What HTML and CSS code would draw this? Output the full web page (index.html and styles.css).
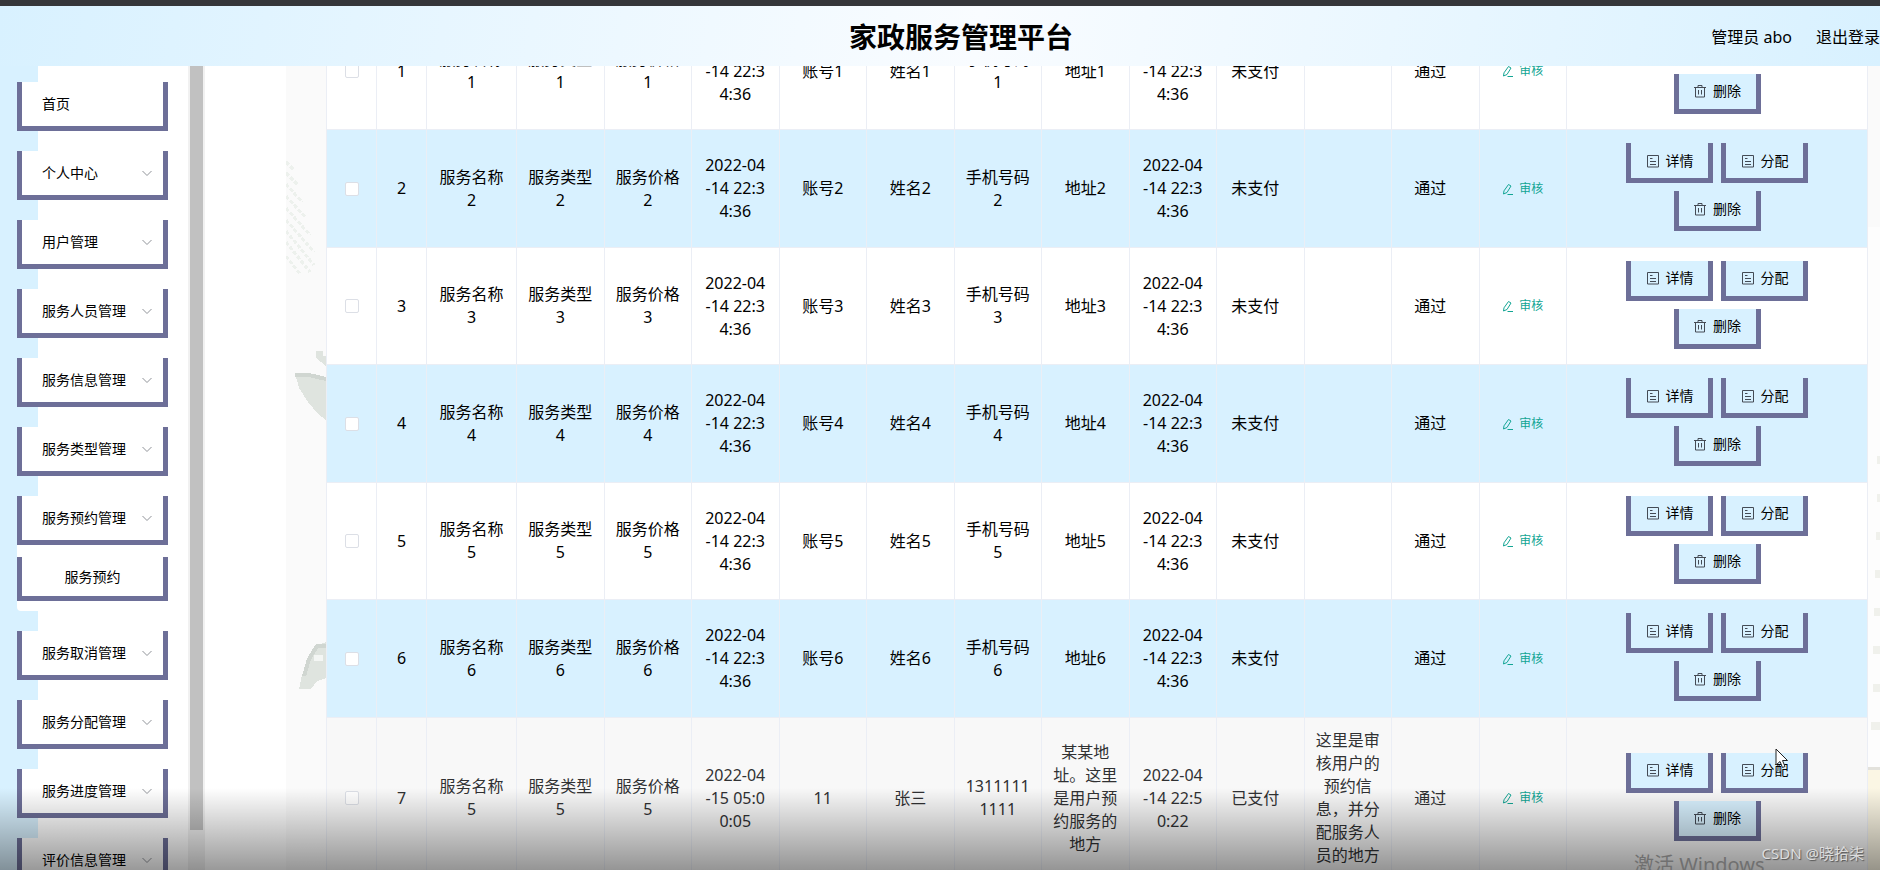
FILE: index.html
```html
<!DOCTYPE html>
<html lang="zh-CN">
<head>
<meta charset="utf-8">
<title>家政服务管理平台</title>
<link rel="stylesheet" href="styles.css">
</head>
<body>
<svg class="sprite" aria-hidden="true">
  <symbol id="i-down" viewBox="0 0 12 12"><path d="M1.500 4l4.500 4.500 4.500-4.500" /></symbol>
  <symbol id="i-doc" viewBox="0 0 14 14"><path d="M1.500 1.500h11v11.500h-11zM4 4.500h2.500M4 7.500h6M4 10.500h6" /></symbol>
  <symbol id="i-trash" viewBox="0 0 14 14"><path d="M1 3.500h12M5 3.500v-2h4v2M2.500 3.500v9.500h9v-9.500M5.500 6v4.500M8.500 6v4.500" /></symbol>
  <symbol id="i-edit" viewBox="0 0 12 12"><path d="M6.500 1.500l2.500 1.500-4 6.500-3.500 1.500 .5-3.200zM5.500 11.500h5.500" /></symbol>
</svg>
<div class="topbar"></div>
<header class="header">
  <h1 class="title">家政服务管理平台</h1>
  <div class="user"><span>管理员 abo</span><a class="logout" href="#">退出登录</a></div>
</header>
<div class="body">
  <nav class="side" id="side"></nav>
  <div class="scrollbar"><div class="thumb"></div></div>
  <main class="main">
    <svg class="art" viewBox="0 0 40 804" aria-hidden="true">
      <g class="stripes"><path d="M0 96l8 8M0 107l12 12M0 118l16 18M0 130l20 22M0 142l24 27M0 154l28 32M0 165l28 34M0 176l24 30M0 190l14 18" /></g>
      <path class="leaf" d="M9 307h14l17 4v43l-8-6-10-12-9-14z" />
      <path class="leaf" d="M30 285h7v5h3v10l-5-4-5-4zM13 623l3-14 6-17 9-13 9-3v36l-9 3-6 8z" />
      <path class="vein" d="M9 309h14l17 4M18 610l5-17 8-13h9" />
      <path class="shine" d="M28 589h9v6h-9z" />
    </svg>
    <div class="sheet">
      <table class="grid">
        <colgroup><col class="c-check"><col class="c-no"><col class="c-name"><col span="12"><col class="c-ops"></colgroup>
        <tbody id="rows"></tbody>
      </table>
    </div>
    <svg class="edge" viewBox="0 0 12 804" aria-hidden="true">
      <path class="sky" d="M0 161h12v541h-12z" />
      <path class="desk" d="M0 704h12v100h-12z" />
      <path class="rim" d="M0 701h12v3h-12z" />
      <path class="beads" d="M9 394h3M9 432h3M8 470h4M7 508h5M6 546h6M5 584h7M5 622h7M3 660h9" />
    </svg>
  </main>
</div>
<div class="shade"></div>
<div class="activate">激活 Windows</div>
<div class="credit">CSDN @晓拾柒</div>
<svg class="cursor" viewBox="0 0 14 22" aria-hidden="true"><path d="M1 1v16l4-3.500 2.500 6 2.500-1-2.500-6h5z" /></svg>
<script src="app.js"></script>
</body>
</html>
```
FILE: app.js
```js
const icon = (id) => `<svg class="icon ${id}"><use href="#${id}"/></svg>`;

const menu = ['首页', '个人中心', '用户管理', '服务人员管理', '服务信息管理', '服务类型管理',
  '服务预约管理', '服务取消管理', '服务分配管理', '服务进度管理', '评价信息管理'];
document.getElementById('side').innerHTML = menu.map((name, i) => {
  const item = `<button type="button" class="item"><span>${name}</span>${i ? icon('i-down') : ''}</button>`;
  const sub = name === '服务预约管理' ? '<div class="sub"><a class="subitem" href="#">服务预约</a></div>' : '';
  return `<div class="group">${item}${sub}</div>`;
}).join('');

const date = '2022-04<br>-14 22:3<br>4:36';
const rows = [1, 2, 3, 4, 5, 6].map((n) => [n, `服务名称${n}`, `服务类型${n}`, `服务价格${n}`, date,
  `账号${n}`, `姓名${n}`, `手机号码${n}`, `地址${n}`, date, '未支付', '', '通过']);
rows.push([7, '服务名称5', '服务类型5', '服务价格5', '2022-04<br>-15 05:0<br>0:05', '11', '张三',
  '1311111<br>1111', '某某地址。这里是用户预约服务的地方', '2022-04<br>-14 22:5<br>0:22', '已支付',
  '这里是审核用户的预约信息，并分配服务人员的地方', '通过']);

const statusColumns = [10, 12];
const op = (id, text) => `<button type="button" class="op">${icon(id)}<span>${text}</span></button>`;
document.getElementById('rows').innerHTML = rows.map((r) => `<tr class="${r[0] === 7 ? 'hover' : ''}">
  <td><input type="checkbox" class="check" aria-label="选择第${r[0]}行"></td>
  ${r.map((c, i) => `<td${statusColumns.includes(i) ? ' class="status"' : ''}>${c}</td>`).join('')}
  <td><button type="button" class="audit">${icon('i-edit')}<span>审核</span></button></td>
  <td><div class="ops">${op('i-doc', '详情')}${op('i-doc', '分配')}${op('i-trash', '删除')}</div></td></tr>`).join('');
```
FILE: styles.css
```css
* { box-sizing: border-box; }
body {
  margin: 0;
  height: 100vh;
  overflow: hidden;
  display: flex;
  flex-direction: column;
  background: #fff;
  color: #000;
  font: 16px/23px "Noto Sans", "Noto Sans CJK SC", sans-serif;
}
button { font-family: inherit; color: inherit; cursor: pointer; }
.sprite { position: absolute; width: 0; height: 0; }
.icon { fill: none; stroke: #444b55; stroke-width: 1; flex: none; }
.topbar { height: 6px; background: #35363a; flex: none; }
.header {
  height: 60px;
  flex: none;
  display: grid;
  grid-template-columns: 1fr auto 1fr;
  align-items: center;
  padding: 2px 0 0 42px;
  background: linear-gradient(100deg, #d8f1ff, #f9fcff 52%, #d8f1ff);
}
.title { grid-column: 2; margin: 0; font-size: 28px; line-height: 40px; font-weight: 700; }
.user { display: flex; justify-content: flex-end; gap: 24px; }
.logout { color: inherit; text-decoration: none; }
.body { flex: 1; min-height: 0; display: flex; overflow: hidden; }
.side {
  width: 188px;
  flex: none;
  padding: 16px 20px 0 17px;
  background: linear-gradient(90deg, #d8f1ff 38px, #fff 38px);
}
.group { margin-bottom: 20px; }
.item, .subitem {
  display: flex;
  align-items: center;
  width: 100%;
  border: 5px solid #6d6f98;
  border-top: 0;
  background: #fff;
  font-size: 14px;
  line-height: 20px;
  color: #000;
}
.item { height: 49px; justify-content: space-between; padding: 0 10px 0 20px; }
.i-down { width: 12px; height: 12px; stroke: #909399; }
.sub { padding: 12px 0 10px; background: #fff; border-radius: 0 0 4px 4px; }
.subitem { height: 44px; justify-content: center; text-decoration: none; }
.scrollbar { width: 17px; flex: none; padding: 0 2px; background: #f1f1f1; }
.thumb { height: 95%; background: #c1c1c1; }
.main {
  flex: 1;
  min-width: 0;
  margin-left: 81px;
  display: flex;
  align-items: flex-end;
  background: #fafafa;
}
.art { width: 40px; height: 804px; flex: none; align-self: flex-start; shape-rendering: crispEdges; }
.stripes { fill: none; stroke: #edf1ed; stroke-width: 3; stroke-dasharray: 4 2; }
.leaf { fill: #dfe4df; }
.vein { fill: none; stroke: #d0d6d1; stroke-width: 4; }
.shine { fill: #f4f6f4; }
.sheet { flex: 1; min-width: 0; margin-bottom: -9px; }
.grid {
  width: 100%;
  table-layout: fixed;
  border-collapse: collapse;
  background: #fff;
  text-align: center;
}
.c-check, .c-no { width: 50px; }
.c-name { width: 90px; }
.c-ops { width: 301px; }
.grid tr { height: 117px; }
.grid tr:nth-child(even) { height: 118px; background: #d8f1ff; }
.grid tr.hover { height: 161px; background: #f8f8f8; color: #303133; }
.grid td { border: 1px solid #ebeef5; padding: 0 10px; vertical-align: middle; }
.grid .status { padding-right: 20px; }
.check {
  appearance: none;
  display: block;
  width: 14px;
  height: 14px;
  margin: 0 auto;
  border: 1px solid #dcdfe6;
  border-radius: 2px;
  background: #fff;
}
.audit {
  display: flex;
  align-items: center;
  gap: 5px;
  margin: 0 auto;
  padding: 0;
  border: 0;
  background: none;
  color: #12a594;
  font-size: 12px;
  line-height: 16px;
}
.i-edit { width: 12px; height: 12px; stroke: #12a594; }
.ops { display: flex; flex-wrap: wrap; justify-content: center; gap: 8px; margin-bottom: 3px; padding: 0 40px; color: #000; }
.op {
  display: flex;
  align-items: center;
  justify-content: center;
  gap: 6px;
  width: 87px;
  height: 40px;
  padding: 0;
  border: 5px solid #6d6f98;
  border-top: 0;
  background: #d8f1ff;
  font-size: 14px;
  line-height: 20px;
}
.i-doc, .i-trash { width: 14px; height: 14px; }
.edge { width: 12px; height: 804px; flex: none; align-self: flex-start; }
.sky { fill: #fdfdfd; }
.desk { fill: #fbf6e4; }
.rim { fill: #e3e2dc; }
.beads { fill: none; stroke: #f0f1ec; stroke-width: 8; }
.shade {
  position: absolute;
  inset: auto 0 0 0;
  height: 82px;
  background: linear-gradient(transparent, rgba(0, 0, 0, .4));
  pointer-events: none;
}
.activate { position: absolute; left: 1634px; top: 851px; font-size: 20px; line-height: 28px; color: #707070; white-space: nowrap; }
.credit { position: absolute; right: 16px; bottom: 6px; font-size: 15px; line-height: 22px; color: #ddd; text-shadow: 1px 1px 1px #555; }
.cursor { position: absolute; left: 1775px; top: 748px; width: 14px; height: 22px; fill: #fff; stroke: #222; }
```
